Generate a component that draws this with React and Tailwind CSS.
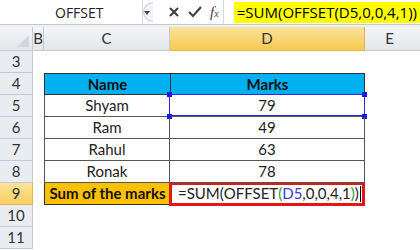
import React from 'react';

const font = { fontFamily: 'Lato, "Open Sans", sans-serif' };

const rows = [
  { n: 3 },
  { n: 4, head: true },
  { n: 5, name: 'Shyam', mark: '79' },
  { n: 6, name: 'Ram', mark: '49' },
  { n: 7, name: 'Rahul', mark: '63' },
  { n: 8, name: 'Ronak', mark: '78' },
  { n: 9, sum: true },
  { n: 10 },
  { n: 11 },
];

const FormulaBar = () => (
  <div className="flex h-[25px] items-center border-b border-[#c6cbd3] bg-white text-[14px] text-[#222]" style={{ fontFamily: '"Open Sans", sans-serif' }}>
    <div className="relative flex h-full w-[157px] items-center border-r border-[#d4d8de]">
      <span className="ml-[55px]">OFFSET</span>
      <span className="absolute left-[144px] top-[11px] h-0 w-0 border-x-[3px] border-t-[4px] border-x-transparent border-t-[#444]" />
    </div>
    <div className="flex h-full w-[14px] items-center">
      <div className="h-[20px] w-[10px] rounded-l-full border border-r-0 border-[#c9ced6] bg-[#f1f3f6]" />
    </div>
    <div className="flex w-[72px] items-center gap-[8px] pl-[12px] text-[#333]">
      <svg width="12" height="12" viewBox="0 0 12 12"><path d="M2 2 L10 10 M10 2 L2 10" stroke="#444" strokeWidth="2.2" /></svg>
      <svg width="14" height="12" viewBox="0 0 14 12"><path d="M1 6 L5 10 L13 1" stroke="#444" strokeWidth="2.2" fill="none" /></svg>
      <span className="italic text-[15px] text-[#444]" style={{ fontFamily: '"Liberation Serif", serif' }}>f<span className="text-[10px]">x</span></span>
    </div>
    <div className="flex h-full flex-1 items-center border-l border-[#d4d8de] pl-[10px]">
      <span className="bg-[#ffff00] px-[3px] py-[1px] text-[15px] leading-[19px] text-black">=SUM(OFFSET(D5,0,0,4,1))</span>
    </div>
  </div>
);

const Cell = ({ className = '', children }) => (
  <div className={`flex items-center justify-center ${className}`}>{children}</div>
);

export default function App() {
  return (
    <div className="h-[250px] w-[420px] overflow-hidden bg-white" style={font}>
      <FormulaBar />
      <div className="h-[2px] bg-[#eef0f3]" />
      <div className="grid grid-cols-[33px_11px_126px_195px_1fr] grid-rows-[24px_repeat(9,22px)] text-[15px] text-[#222]">
        {/* header row */}
        <div className="relative border-b border-r border-[#c5cad2] bg-gradient-to-b from-[#f4f5f7] to-[#e3e6ea]">
          <span className="absolute bottom-[3px] right-[3px] h-0 w-0 border-b-[12px] border-l-[12px] border-l-transparent border-b-[#d2d6dc]" />
        </div>
        <Cell className="border-b border-r border-[#c5cad2] bg-gradient-to-b from-[#f4f5f7] to-[#e3e6ea] text-[#333]">B</Cell>
        <Cell className="border-b border-r border-[#c5cad2] bg-gradient-to-b from-[#f4f5f7] to-[#e3e6ea] text-[#333]">C</Cell>
        <Cell className="border-b border-r border-[#e2b54c] bg-gradient-to-b from-[#fbe29a] to-[#f7c94f] text-[#333]">D</Cell>
        <Cell className="border-b border-[#c5cad2] bg-gradient-to-b from-[#f4f5f7] to-[#e3e6ea] pr-[6px] text-[#333]">E</Cell>

        {rows.map((r) => (
          <React.Fragment key={r.n}>
            <Cell
              className={`border-b border-r text-[#333] ${
                r.sum ? 'border-[#e2b54c] bg-gradient-to-b from-[#fde39a] to-[#f9cf63]' : 'border-[#c5cad2] bg-[#e9ecf1]'
              }`}
            >
              {r.n}
            </Cell>
            <div />
            {r.head ? (
              <>
                <Cell className="border border-r-0 border-[#333] bg-[#00b0f0] font-bold text-[#111]">Name</Cell>
                <Cell className="border border-[#333] bg-[#00b0f0] font-bold text-[#111]">Marks</Cell>
              </>
            ) : r.sum ? (
              <>
                <Cell className="border border-t-0 border-r-0 border-[#333] bg-[#ffc000] font-bold text-[#111]">Sum of the marks</Cell>
                <div className="flex items-center border-b border-r border-[#333]">
                  <div className="-m-[1px] flex h-[24px] w-[198px] items-center whitespace-nowrap border-[3px] border-[#e01818] pl-[6px]">
                    <span>=SUM(</span>
                    <span>OFFSET</span>
                    <span className="text-[#2e9a2e]">(</span>
                    <span className="text-[#3a3ad8]">D5</span>
                    <span>,0,0,4,1</span>
                    <span className="text-[#2e9a2e]">)</span>
                    <span>)</span>
                    <span className="ml-[1px] h-[16px] w-px shrink-0 bg-black" />
                  </div>
                </div>
              </>
            ) : r.name ? (
              <>
                <Cell className="border-b border-l border-r border-[#555]">{r.name}</Cell>
                <div className="relative flex items-center justify-center border-b border-r border-[#555]">
                  {r.n === 5 && (
                    <>
                      <div className="absolute -inset-x-[1px] -top-[1px] bottom-0 border border-[#2a2ae0]" />
                      <span className="absolute -left-[3px] -top-[3px] h-[5px] w-[5px] bg-[#1a1ae8]" />
                      <span className="absolute -right-[3px] -top-[3px] h-[5px] w-[5px] bg-[#1a1ae8]" />
                      <span className="absolute -bottom-[3px] -left-[3px] h-[5px] w-[5px] bg-[#1a1ae8]" />
                      <span className="absolute -bottom-[3px] -right-[3px] h-[5px] w-[5px] bg-[#1a1ae8]" />
                    </>
                  )}
                  {r.mark}
                </div>
              </>
            ) : (
              <>
                <div />
                <div />
              </>
            )}
            <div />
          </React.Fragment>
        ))}
      </div>
    </div>
  );
}
